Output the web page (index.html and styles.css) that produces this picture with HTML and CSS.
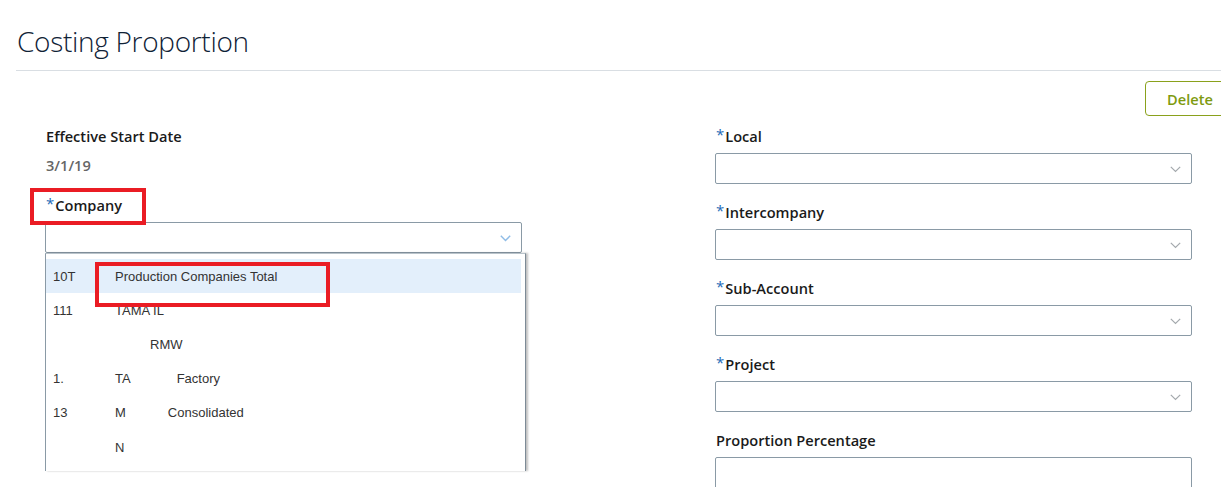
FILE: index.html
```html
<!DOCTYPE html>
<html lang="en">
<head>
<meta charset="utf-8">
<title>Costing Proportion</title>
<link rel="stylesheet" href="styles.css">
</head>
<body>
<div class="page">
  <header class="header">
    <h1 class="title">Costing Proportion</h1>
  </header>
  <div class="toolbar">
    <button class="btn-delete" type="button">Delete</button>
  </div>
  <div class="form">
    <div class="col">
      <div class="field">
        <div class="label">Effective Start Date</div>
        <div class="value">3/1/19</div>
      </div>
      <div class="field field-company">
        <div class="label"><span class="req">*</span>Company</div>
        <div class="select select-open">
          <span class="chev chev-blue"><svg width="11" height="7" viewBox="0 0 11 7"><path d="M0.8 0.8 L5.5 5.5 L10.2 0.8" fill="none" stroke="currentColor" stroke-width="1.4"/></svg></span>
        </div>
        <div class="dropdown">
          <div class="opt opt-active"><span class="code">10T</span><span class="name">Production Companies Total</span></div>
          <div class="opt"><span class="code">111</span><span class="name name-cut">TAMA IL</span></div>
          <div class="opt"><span class="code"></span><span class="name"><span class="frag frag-rmw">RMW</span></span></div>
          <div class="opt"><span class="code">1.</span><span class="name">TA<span class="frag frag-factory">Factory</span></span></div>
          <div class="opt"><span class="code">13</span><span class="name">M<span class="frag frag-cons">Consolidated</span></span></div>
          <div class="opt"><span class="code"></span><span class="name name-low">N</span></div>
        </div>
        <div class="mark mark-label"></div>
        <div class="mark mark-option"></div>
      </div>
    </div>
    <div class="col">
      <div class="field">
        <div class="label"><span class="req">*</span>Local</div>
        <div class="select"><span class="chev"><svg width="11" height="7" viewBox="0 0 11 7"><path d="M0.8 0.8 L5.5 5.5 L10.2 0.8" fill="none" stroke="currentColor" stroke-width="1.2"/></svg></span></div>
      </div>
      <div class="field">
        <div class="label"><span class="req">*</span>Intercompany</div>
        <div class="select"><span class="chev"><svg width="11" height="7" viewBox="0 0 11 7"><path d="M0.8 0.8 L5.5 5.5 L10.2 0.8" fill="none" stroke="currentColor" stroke-width="1.2"/></svg></span></div>
      </div>
      <div class="field">
        <div class="label"><span class="req">*</span>Sub-Account</div>
        <div class="select"><span class="chev"><svg width="11" height="7" viewBox="0 0 11 7"><path d="M0.8 0.8 L5.5 5.5 L10.2 0.8" fill="none" stroke="currentColor" stroke-width="1.2"/></svg></span></div>
      </div>
      <div class="field">
        <div class="label"><span class="req">*</span>Project</div>
        <div class="select"><span class="chev"><svg width="11" height="7" viewBox="0 0 11 7"><path d="M0.8 0.8 L5.5 5.5 L10.2 0.8" fill="none" stroke="currentColor" stroke-width="1.2"/></svg></span></div>
      </div>
      <div class="field">
        <div class="label">Proportion Percentage</div>
        <div class="input"></div>
      </div>
    </div>
  </div>
</div>
</body>
</html>
```
FILE: styles.css
```css
html, body {
  margin: 0;
  padding: 0;
  background: #ffffff;
  overflow: hidden;
}
body {
  width: 1221px;
  height: 487px;
  font-family: "Open Sans", "Noto Sans", sans-serif;
  color: #1a1a1a;
}
.page {
  padding-left: 16px;
}
.header {
  border-bottom: 1px solid #d9dee3;
  height: 71px;
  box-sizing: border-box;
}
.title {
  margin: 0;
  padding: 21px 0 0 1px;
  font-size: 28px;
  font-weight: 300;
  line-height: 40px;
  color: #0f2236;
  letter-spacing: -0.3px;
}
.toolbar {
  display: flex;
  justify-content: flex-end;
  padding-top: 10px;
  margin-right: -14px;
}
.btn-delete {
  height: 35px;
  width: 90px;
  box-sizing: border-box;
  border: 1px solid #8aa11c;
  border-radius: 4px;
  background: #ffffff;
  color: #7e9a0f;
  font-family: "Open Sans", "Noto Sans", sans-serif;
  font-size: 14.6px;
  font-weight: 600;
  padding: 0;
  text-align: center;
}
.form {
  display: grid;
  grid-template-columns: 477px 477px;
  column-gap: 193px;
  padding-left: 29px;
  padding-top: 10px;
}
.col {
  display: flex;
  flex-direction: column;
}
.field {
  display: flex;
  flex-direction: column;
  margin-bottom: 18px;
}
.label {
  font-size: 14.6px;
  font-weight: 600;
  line-height: 20px;
  height: 20px;
  color: #1a1a1a;
  margin-bottom: 7px;
  padding-left: 1px;
  white-space: nowrap;
}
.req {
  color: #1f6cb8;
  font-weight: 400;
  font-size: 15px;
  line-height: 0;
  margin-right: 1px;
  position: relative;
  top: -2px;
}
.value {
  font-size: 14.6px;
  line-height: 20px;
  color: #666666;
  font-weight: 600;
  margin-top: 2px;
  padding-left: 1px;
}
.field + .field-company {
  margin-top: 2px;
}
.select, .input {
  height: 31px;
  box-sizing: border-box;
  border: 1px solid #8a9aa6;
  border-radius: 2px;
  background: #fff;
  display: flex;
  align-items: center;
  justify-content: flex-end;
  padding-right: 10px;
}
.input {
  height: 34px;
}
.chev {
  display: flex;
  color: #a4a9ad;
  margin-top: 2px;
}
.chev-blue {
  color: #8fbce6;
}
.field-company {
  position: relative;
}
.dropdown {
  width: 481px;
  height: 218px;
  box-sizing: border-box;
  border-left: 1px solid #8a9aa6;
  border-right: 1px solid #7d8b96;
  border-top: 1px solid #b9c3ca;
  box-shadow: 2px 0 2px rgba(0, 0, 0, 0.25);
  padding: 5px 4px 0 0;
  font-family: "Liberation Sans", Arial, sans-serif;
  font-size: 13px;
  color: #333333;
}
.opt {
  height: 34px;
  display: flex;
  align-items: center;
}
.opt-active {
  background: #e3effb;
}
.code {
  width: 69px;
  padding-left: 7px;
  box-sizing: border-box;
  flex: none;
}
.name {
  white-space: nowrap;
}
.frag-rmw {
  margin-left: 35px;
}
.frag-factory {
  margin-left: 46px;
}
.frag-cons {
  margin-left: 42px;
}
.name-low {
  margin-top: 2px;
}
.mark {
  position: absolute;
  border: 4px solid #ea1c24;
  box-sizing: border-box;
  pointer-events: none;
}
.mark-label {
  left: -15px;
  top: -7px;
  width: 116px;
  height: 37px;
}
.mark-option {
  left: 50px;
  top: 67px;
  width: 235px;
  height: 45px;
}
```
